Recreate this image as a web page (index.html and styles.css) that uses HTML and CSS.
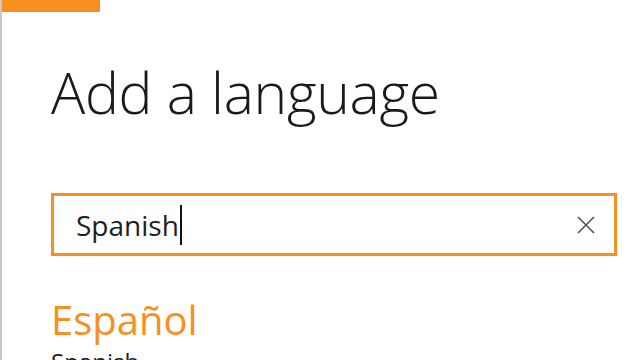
FILE: index.html
```html
<!DOCTYPE html>
<html lang="en">
<head>
  <meta charset="UTF-8">
  <title>Add a language</title>
  <link rel="stylesheet" href="styles.css">
</head>
<body>
  <div class="panel">
    <div class="accent"></div>
    <div class="content">
      <h1>Add a language</h1>

      <div class="search">
        <span class="search-text">Spanish</span><span class="caret"></span>
        <svg class="clear" width="18" height="18" viewBox="0 0 18 18">
          <path d="M1 1 L17 17 M17 1 L1 17" stroke="#4a4a4a" stroke-width="1.5" fill="none"/>
        </svg>
      </div>

      <div class="result">
        <div class="result-native">Español</div>
        <div class="result-name">Spanish</div>
      </div>
    </div>
  </div>
</body>
</html>
```

FILE: styles.css
```css
* {
  box-sizing: border-box;
}
body, html {
  margin: 0;
  padding: 0;
  height: 100%;
  overflow: hidden;
  background: #fff;
  font-family: "Open Sans", "Noto Sans", sans-serif;
}

.panel {
  height: 100%;
  border-left: 2px solid #c8c8c8;
}

.accent {
  width: 98px;
  height: 12px;
  background: #f7901e;
}

.content {
  padding: 0 23px 0 49px;
}

h1 {
  margin: 46px 0 0 0;
  font-weight: 300;
  font-size: 57px;
  line-height: 68px;
  color: #1a1a1a;
  letter-spacing: -0.3px;
}

.search {
  margin-top: 67px;
  height: 63px;
  border: 3px solid #f7901e;
  display: flex;
  align-items: center;
  padding: 0 19px 0 22px;
}

.search-text {
  font-size: 28px;
  color: #1e1e1e;
}

.caret {
  width: 2px;
  height: 40px;
  background: #111;
  margin-left: 1px;
}

.clear {
  margin-left: auto;
}

.result {
  margin-top: 39px;
}

.result-native {
  font-size: 40px;
  line-height: 50px;
  color: #f7901e;
}

.result-name {
  font-size: 24px;
  color: #1e1e1e;
}
```
